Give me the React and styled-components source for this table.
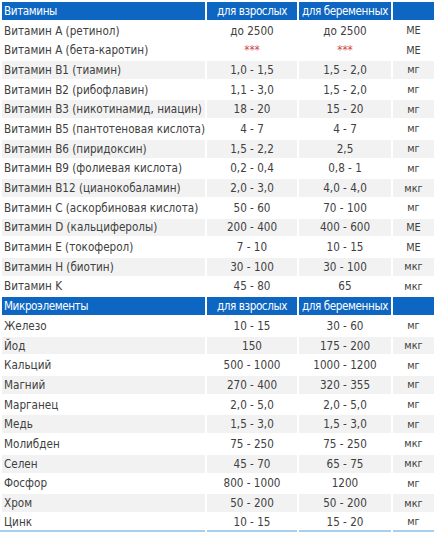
import styled, { createGlobalStyle } from 'styled-components';

const GlobalStyle = createGlobalStyle`
  html, body {
    margin: 0;
    padding: 0;
    background: #fff;
  }
  body {
    font-family: "DejaVu Sans Condensed", "DejaVu Sans", "Liberation Sans", sans-serif;
    font-stretch: condensed;
    overflow: hidden;
  }
`;

// Table data
const vitamins = [
  ['Витамин A (ретинол)', 'до 2500', 'до 2500', 'МЕ'],
  ['Витамин A (бета-каротин)', '***', '***', 'МЕ'],
  ['Витамин B1 (тиамин)', '1,0 - 1,5', '1,5 - 2,0', 'мг'],
  ['Витамин B2 (рибофлавин)', '1,1 - 3,0', '1,5 - 2,0', 'мг'],
  ['Витамин B3 (никотинамид, ниацин)', '18 - 20', '15 - 20', 'мг'],
  ['Витамин B5 (пантотеновая кислота)', '4 - 7', '4 - 7', 'мг'],
  ['Витамин B6 (пиридоксин)', '1,5 - 2,2', '2,5', 'мг'],
  ['Витамин B9 (фолиевая кислота)', '0,2 - 0,4', '0,8 - 1', 'мг'],
  ['Витамин B12 (цианокобаламин)', '2,0 - 3,0', '4,0 - 4,0', 'мкг'],
  ['Витамин C (аскорбиновая кислота)', '50 - 60', '70 - 100', 'мг'],
  ['Витамин D (кальциферолы)', '200 - 400', '400 - 600', 'МЕ'],
  ['Витамин E (токоферол)', '7 - 10', '10 - 15', 'МЕ'],
  ['Витамин H (биотин)', '30 - 100', '30 - 100', 'мкг'],
  ['Витамин K', '45 - 80', '65', 'мкг'],
];

const minerals = [
  ['Железо', '10 - 15', '30 - 60', 'мг'],
  ['Йод', '150', '175 - 200', 'мкг'],
  ['Кальций', '500 - 1000', '1000 - 1200', 'мг'],
  ['Магний', '270 - 400', '320 - 355', 'мг'],
  ['Марганец', '2,0 - 5,0', '2,0 - 5,0', 'мг'],
  ['Медь', '1,5 - 3,0', '1,5 - 3,0', 'мг'],
  ['Молибден', '75 - 250', '75 - 250', 'мкг'],
  ['Селен', '45 - 70', '65 - 75', 'мкг'],
  ['Фосфор', '800 - 1000', '1200', 'мг'],
  ['Хром', '50 - 200', '50 - 200', 'мкг'],
  ['Цинк', '10 - 15', '15 - 20', 'мг'],
];

const Table = styled.div`
  display: grid;
  grid-template-columns: 203px 90px 92px 1fr;
  grid-auto-rows: 17.7px;
  gap: 2px;
  padding: 2px 0 0 2px;
  width: 434px;
  box-sizing: border-box;
  font-size: 11.6px;
  color: #404040;
`;

const HeadCell = styled.div`
  background: #0d66c2;
  color: #fff;
  display: flex;
  align-items: center;
  justify-content: ${(p) => (p.$left ? 'flex-start' : 'center')};
  padding-left: ${(p) => (p.$left ? '2px' : '0')};
  white-space: nowrap;
  overflow: hidden;
  letter-spacing: -0.4px;
  margin-right: ${(p) => (p.$last ? '-4px' : '0')};
`;

const Cell = styled.div`
  background: ${(p) => (p.$shade ? '#f2f2f2' : '#fff')};
  display: flex;
  align-items: center;
  justify-content: ${(p) => (p.$left ? 'flex-start' : 'center')};
  white-space: nowrap;
  color: ${(p) => (p.$red ? '#d04848' : 'inherit')};
  font-size: ${(p) => (p.$unit ? '10.8px' : 'inherit')};
  border-bottom: ${(p) => (p.$bottom ? '2px solid #a9cff0' : 'none')};
  margin-left: ${(p) => (p.$bottom && p.$left ? '-2px' : '0')};
  padding-left: ${(p) => (p.$left ? (p.$bottom ? '4px' : '2px') : '0')};
`;

const Header = ({ title }) => (
  <>
    <HeadCell $left>{title}</HeadCell>
    <HeadCell>для взрослых</HeadCell>
    <HeadCell>для беременных</HeadCell>
    <HeadCell $last />
  </>
);

const Rows = ({ rows, shadeOdd, lastBottom }) =>
  rows.map((r, i) => {
    const shade = shadeOdd ? i % 2 === 1 : i >= 2 && i % 2 === 0;
    const bottom = lastBottom && i === rows.length - 1;
    return r.map((v, j) => (
      <Cell
        key={`${r[0]}-${j}`}
        $left={j === 0}
        $unit={j === 3}
        $shade={shade}
        $red={v === '***'}
        $bottom={bottom}
      >
        {v}
      </Cell>
    ));
  });

export default function App() {
  return (
    <>
      <GlobalStyle />
      <Table>
        <Header title="Витамины" />
        <Rows rows={vitamins} />
        <Header title="Микроэлементы" />
        <Rows rows={minerals} shadeOdd lastBottom />
      </Table>
    </>
  );
}
